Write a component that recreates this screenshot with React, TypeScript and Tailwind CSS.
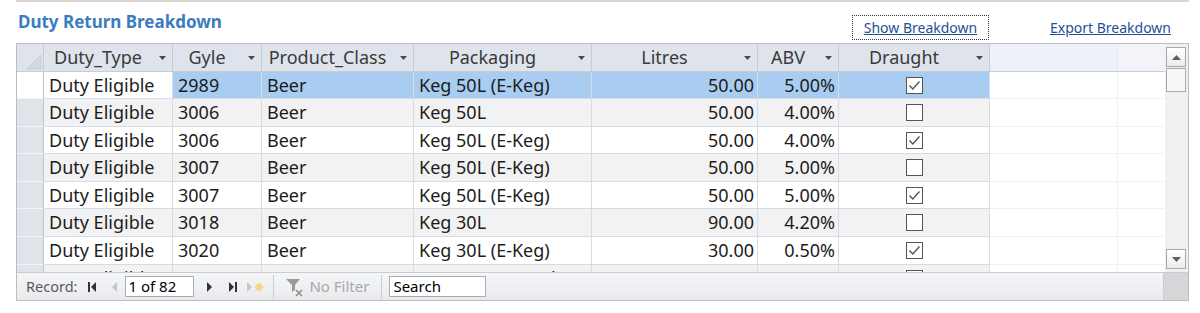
import React from 'react';

type Rec = {
  type: string;
  gyle: string;
  cls: string;
  pack: string;
  litres: string;
  abv: string;
  draught: boolean;
};

const rows: Rec[] = [
  { type: 'Duty Eligible', gyle: '2989', cls: 'Beer', pack: 'Keg 50L (E-Keg)', litres: '50.00', abv: '5.00%', draught: true },
  { type: 'Duty Eligible', gyle: '3006', cls: 'Beer', pack: 'Keg 50L', litres: '50.00', abv: '4.00%', draught: false },
  { type: 'Duty Eligible', gyle: '3006', cls: 'Beer', pack: 'Keg 50L (E-Keg)', litres: '50.00', abv: '4.00%', draught: true },
  { type: 'Duty Eligible', gyle: '3007', cls: 'Beer', pack: 'Keg 50L (E-Keg)', litres: '50.00', abv: '5.00%', draught: false },
  { type: 'Duty Eligible', gyle: '3007', cls: 'Beer', pack: 'Keg 50L (E-Keg)', litres: '50.00', abv: '5.00%', draught: true },
  { type: 'Duty Eligible', gyle: '3018', cls: 'Beer', pack: 'Keg 30L', litres: '90.00', abv: '4.20%', draught: false },
  { type: 'Duty Eligible', gyle: '3020', cls: 'Beer', pack: 'Keg 30L (E-Keg)', litres: '30.00', abv: '0.50%', draught: true },
  { type: 'Duty Eligible', gyle: '3021', cls: 'Beer', pack: 'Case 12 x 500ml', litres: '10.00', abv: '5.00%', draught: false },
];

// rows alternate 27/28px so the grid lands on the 27.5px pitch of the screenshot
const heights = ['h-[27px]', 'h-[28px]', 'h-[27px]', 'h-[28px]', 'h-[27px]', 'h-[28px]', 'h-[28px]', 'h-[28px]'];

function DropArrow() {
  return (
    <svg width="7" height="4" viewBox="0 0 7 4">
      <path d="M0 0H7L3.5 4Z" fill="#4a4a4a" />
    </svg>
  );
}

function HeaderCell({ title, w }: { title: string; w: string }) {
  return (
    <div className={`${w} shrink-0 h-full flex items-center border-r border-[#c6ccd7]`}>
      <span className="flex-1 text-center">{title}</span>
      <span className="w-[20px] flex justify-center">
        <DropArrow />
      </span>
    </div>
  );
}

function Check({ on }: { on: boolean }) {
  return (
    <div className="w-[17px] h-[17px] border border-[#555] bg-white flex items-center justify-center">
      {on && (
        <svg width="13" height="11" viewBox="0 0 13 11">
          <path d="M1.5 5.5L4.8 9L11.5 1.5" fill="none" stroke="#555" strokeWidth="1.4" />
        </svg>
      )}
    </div>
  );
}

function DataRow({ r, i }: { r: Rec; i: number }) {
  const sel = i === 0;
  const bg = sel ? 'bg-[#a8cdf0]' : i % 2 === 1 ? 'bg-[#f2f2f2]' : 'bg-white';
  const cell = 'shrink-0 h-full flex items-center px-[5px] border-r border-b border-[#d5dbe7] whitespace-nowrap overflow-hidden';
  return (
    <div className={`${heights[i]} flex shrink-0`}>
      <div className={`w-[27px] shrink-0 h-full border-r border-[#bcc4d1] border-b ${sel ? 'bg-white border-b-[#eef0f4]' : 'bg-[#dfe3ea] border-b-[#f3f4f7]'}`} />
      <div className={`${cell} w-[129px] ${sel ? 'bg-white' : bg}`}>{r.type}</div>
      <div className={`${cell} w-[89px] ${bg}`}>{r.gyle}</div>
      <div className={`${cell} w-[152px] ${bg}`}>{r.cls}</div>
      <div className={`${cell} w-[178px] ${bg}`}>{r.pack}</div>
      <div className={`${cell} w-[166px] justify-end pr-[3px] ${bg}`}>{r.litres}</div>
      <div className={`${cell} w-[81px] justify-end pr-[3px] ${bg}`}>{r.abv}</div>
      <div className={`${cell} w-[151px] justify-center ${bg}`}>
        <Check on={r.draught} />
      </div>
      <div className="w-[128px] shrink-0 h-full bg-white border-r border-b border-[#eef2f2]" />
      <div className="flex-1 h-full bg-white border-b border-[#eef2f2]" />
    </div>
  );
}

function ScrollButton({ up }: { up: boolean }) {
  return (
    <div className="w-[20px] h-[20px] border border-[#a9a9a9] bg-linear-to-b from-white to-[#ececec] flex items-center justify-center">
      <svg width="9" height="5" viewBox="0 0 9 5">
        <path d={up ? 'M0 5H9L4.5 0Z' : 'M0 0H9L4.5 5Z'} fill="#5e5e5e" />
      </svg>
    </div>
  );
}

function NavBar() {
  return (
    <div className="h-[28px] flex border-t border-[#c9ccd1]">
      <div className="flex-1 flex items-center bg-linear-to-b from-[#f5f6f8] to-[#e8eaed] text-[14.5px]">
        <span className="ml-[9px] text-[#5a5a5a]">Record:</span>
        <svg className="ml-[11px]" width="8" height="10" viewBox="0 0 8 10">
          <rect x="0" y="0" width="2" height="10" fill="#333" />
          <path d="M8 0V10L3 5Z" fill="#333" />
        </svg>
        <svg className="ml-[16px]" width="5" height="10" viewBox="0 0 5 10">
          <path d="M5 0V10L0 5Z" fill="#c4c4c4" />
        </svg>
        <div className="ml-[8px] w-[69px] h-[21px] bg-white border border-[#a8aeb6] flex items-center pl-[2px] text-[15px] text-black">
          1 of 82
        </div>
        <svg className="ml-[13px]" width="5" height="10" viewBox="0 0 5 10">
          <path d="M0 0V10L5 5Z" fill="#333" />
        </svg>
        <svg className="ml-[17px]" width="8" height="10" viewBox="0 0 8 10">
          <path d="M0 0V10L5 5Z" fill="#333" />
          <rect x="6" y="0" width="2" height="10" fill="#333" />
        </svg>
        <svg className="ml-[10px]" width="18" height="12" viewBox="0 0 18 12">
          <path d="M0 1V11L5 6Z" fill="#c8c8c8" />
          <circle cx="12" cy="6" r="3.2" fill="#f3dc8c" />
          <path d="M12 1V11M7 6H17M8.5 2.5L15.5 9.5M15.5 2.5L8.5 9.5" stroke="#f0d67a" strokeWidth="1" />
        </svg>
        <div className="ml-[8px] w-[1px] h-[24px] bg-[#c9ccd1]" />
        <svg className="ml-[11px]" width="20" height="20" viewBox="0 0 20 20">
          <path d="M1 2H15L10 8V13L7 15V8Z" fill="#9a9a9a" />
          <path d="M11 13L17 19M17 13L11 19" stroke="#8f8f8f" strokeWidth="1.6" />
        </svg>
        <span className="ml-[4px] text-[15px] text-[#a9a9a9]">No Filter</span>
        <div className="ml-[12px] w-[1px] h-[24px] bg-[#c9ccd1]" />
        <div className="ml-[7px] w-[97px] h-[21px] bg-white border border-[#a8aeb6] flex items-center pl-[3px] text-[15px] text-black">
          Search
        </div>
      </div>
      <div className="w-[25px] bg-[#d6d7d9] border-l border-[#c9ccd1]" />
    </div>
  );
}

export default function App() {
  return (
    <div className="w-[1200px] h-[313px] bg-white font-['Noto_Sans',sans-serif] text-[#1c1c1c]">
      <div className="ml-[16px] w-[1173px] h-[2px] bg-[#d6d6d6]" />
      <div className="ml-[16px] w-[1173px] h-[41px] flex">
        <div className="pl-[2px] pt-[9px] text-[17px] leading-[22px] font-bold text-[#3b7cc0]">
          Duty Return Breakdown
        </div>
        <div className="flex-1" />
        <div className="mt-[13px] h-[25px] w-[137px] border border-dotted border-[#333] flex items-center justify-center text-[14px] underline text-[#1f4f96]">
          Show Breakdown
        </div>
        <div className="ml-[61px] mt-[13px] h-[25px] flex items-center text-[14px] underline text-[#1f4f96]">
          Export Breakdown
        </div>
        <div className="w-[18px]" />
      </div>

      <div className="ml-[16px] w-[1173px] h-[258px] border border-[#bdbdbd] flex flex-col text-[18px]">
        <div className="flex h-[228px]">
          <div className="flex-1 flex flex-col overflow-hidden">
            <div className="h-[28px] shrink-0 flex bg-[#dfe4ec] border-b border-[#c6ccd8] text-[#3a3a3a]">
              <div className="w-[27px] shrink-0 h-full border-r border-[#c6ccd7] flex items-end justify-end">
                <svg width="20" height="20" viewBox="0 0 20 20">
                  <path d="M4 18L18 4V18Z" fill="#d3d8e0" stroke="#c4cad4" strokeWidth="0.8" />
                </svg>
              </div>
              <HeaderCell title="Duty_Type" w="w-[129px]" />
              <HeaderCell title="Gyle" w="w-[89px]" />
              <HeaderCell title="Product_Class" w="w-[152px]" />
              <HeaderCell title="Packaging" w="w-[178px]" />
              <HeaderCell title="Litres" w="w-[166px]" />
              <HeaderCell title="ABV" w="w-[81px]" />
              <HeaderCell title="Draught" w="w-[151px]" />
              <div className="w-[128px] shrink-0 h-full bg-[#eff1fa] border-r border-[#e6eaf0]" />
              <div className="flex-1 h-full bg-[#f3f4fa]" />
            </div>
            <div className="flex-1 flex flex-col overflow-hidden">
              {rows.map((r, i) => (
                <DataRow key={i} r={r} i={i} />
              ))}
            </div>
          </div>
          <div className="w-[23px] bg-[#f0f0f0] flex flex-col pl-[1px] pt-[3px] pb-[3px]">
            <ScrollButton up />
            <div className="mt-[1px] w-[20px] h-[24px] border border-[#a9a9a9] bg-[#f7f7f7]" />
            <div className="flex-1" />
            <ScrollButton up={false} />
          </div>
        </div>
        <NavBar />
      </div>
    </div>
  );
}
